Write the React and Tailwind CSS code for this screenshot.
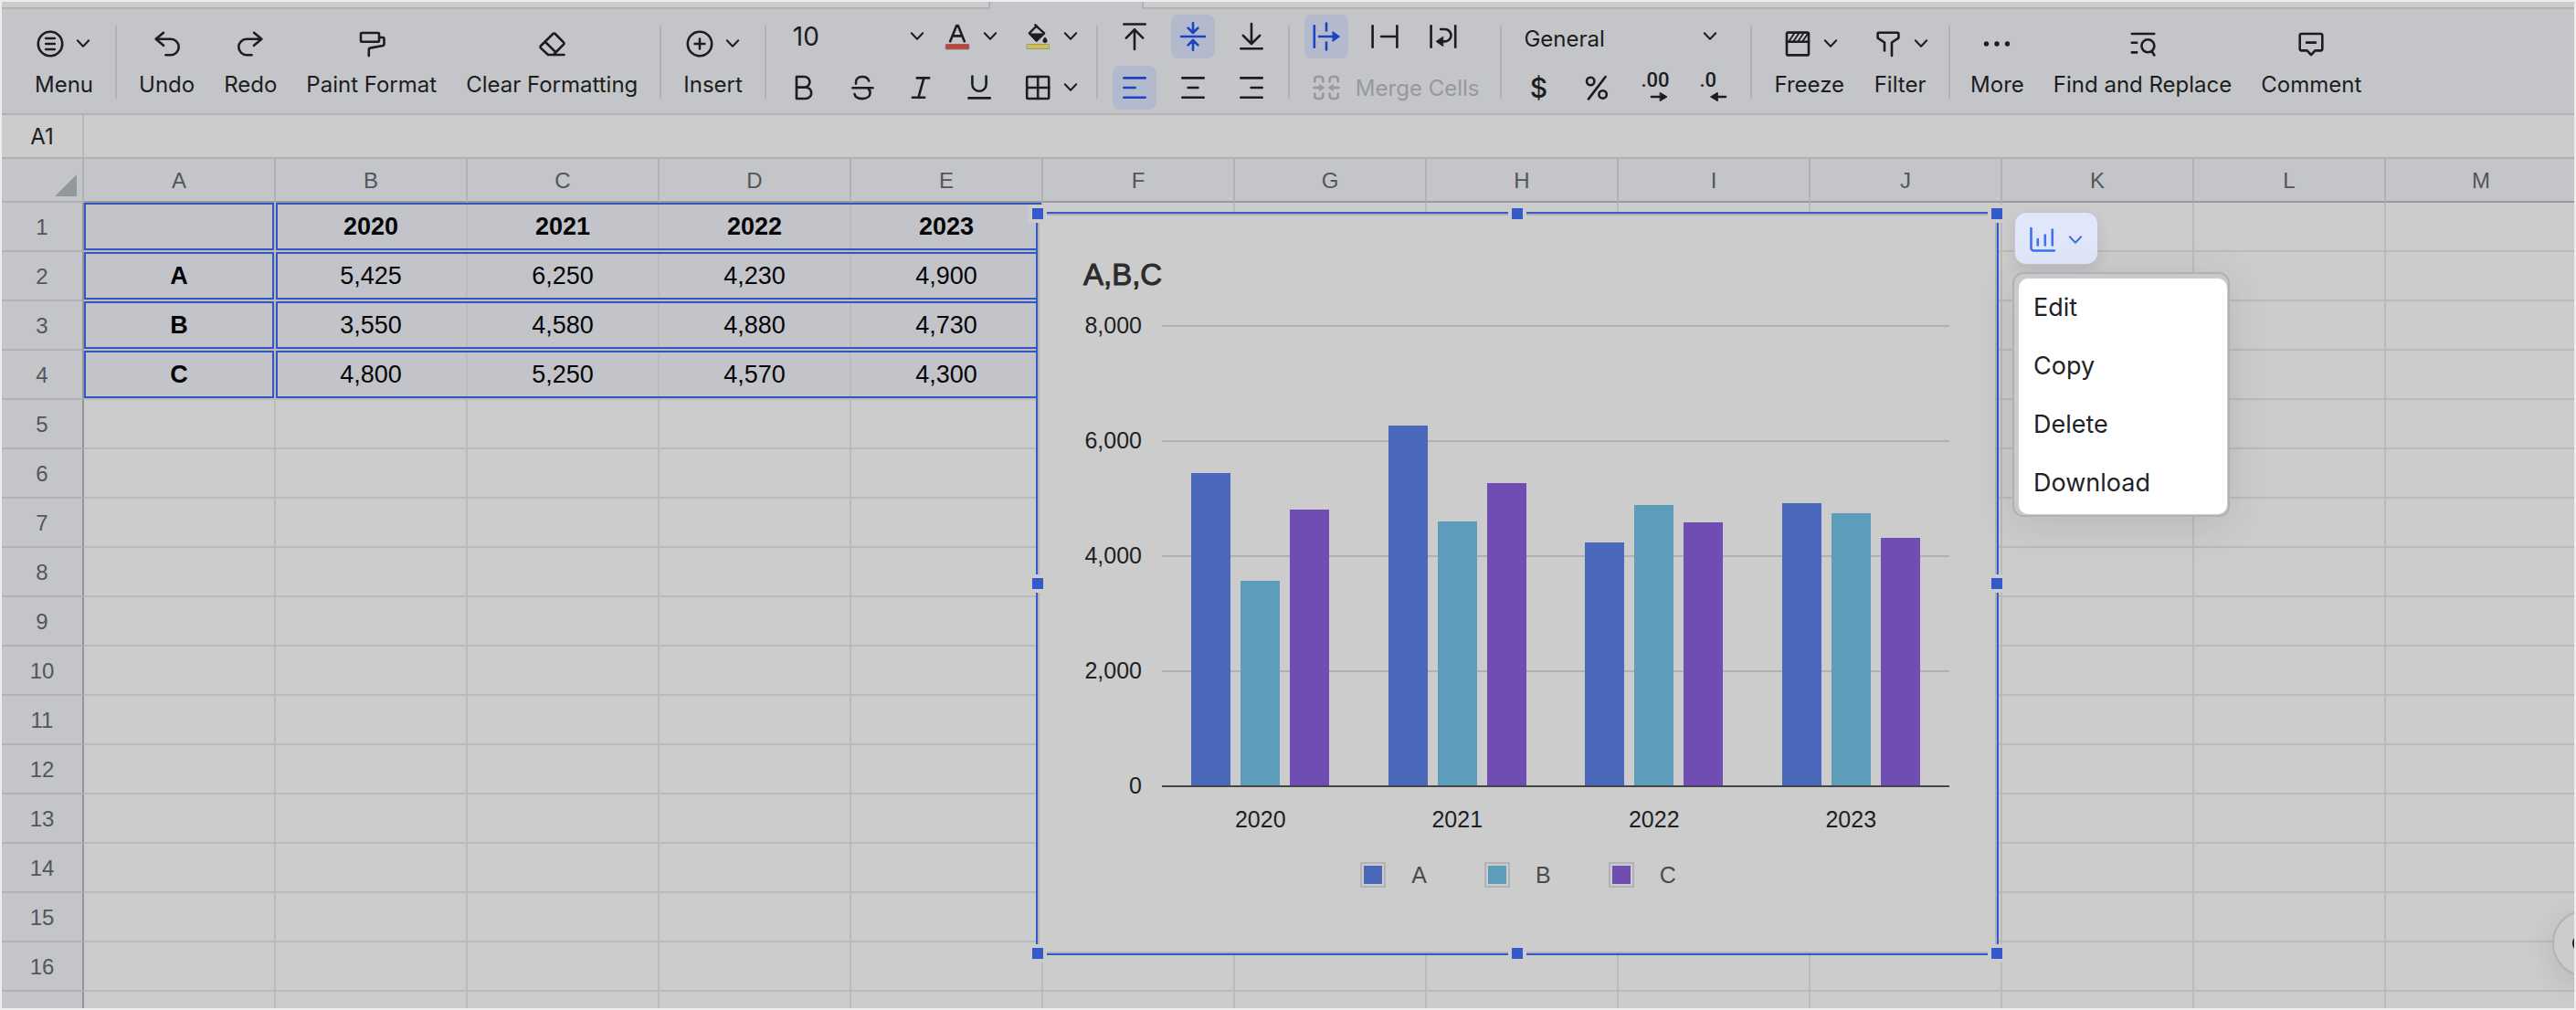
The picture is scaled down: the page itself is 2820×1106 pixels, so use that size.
import React from "react";

const UI = "font-['Inter','Liberation_Sans',sans-serif]";

function Svg({ children, className = "size-8 shrink-0", sw = 2.6 }) {
  return (
    <svg viewBox="0 0 32 32" className={className} fill="none" stroke="currentColor" strokeWidth={sw} strokeLinecap="round" strokeLinejoin="round" aria-hidden="true">
      {children}
    </svg>
  );
}

function Chevron({ className = "" }) {
  return (
    <svg viewBox="0 0 20 20" className={`size-5 shrink-0 ${className}`} fill="none" stroke="currentColor" strokeWidth="2" strokeLinecap="round" strokeLinejoin="round" aria-hidden="true">
      <path d="M3.8 6.2 10 12.8l6.2-6.6" />
    </svg>
  );
}

const icons = {
  menu: <><circle cx="16" cy="16" r="13.2" /><path d="M11.2 10h9.6M11.2 16h9.6M11.2 22h9.6" /></>,
  undo: <path d="M12 3.8 3.6 10.8 12 17.8M3.6 10.8H20a8.7 8.7 0 0 1 0 17.4h-5.6" />,
  redo: <path d="M20 3.8l8.4 7-8.4 7M28.4 10.8H12a8.7 8.7 0 0 0 0 17.4h5.6" />,
  paint: <><rect x="4" y="4" width="20" height="9.8" rx="1" /><path d="M24.5 9H28a1.5 1.5 0 0 1 1.5 1.5v6a1.5 1.5 0 0 1-1.2 1.5L14 20.6a1.5 1.5 0 0 0-1.2 1.5v7" /></>,
  eraser: <path d="M29.5 28H12L4 20.6a1.6 1.6 0 0 1 0-2.3L17.4 5a1.6 1.6 0 0 1 2.3 0L29 14.3a1.6 1.6 0 0 1 0 2.3L17.8 28M9 14l11.6 11.4" />,
  insert: <><circle cx="16" cy="16" r="13.2" /><path d="M10.6 16h10.8M16 10.6v10.8" /></>,
  fontColor: <><path d="M8.2 21.2 15.2 4h1.6l7 17.2M10.8 15.4h10.4" /><rect x="3.7" y="24.6" width="25" height="5.2" fill="#c0443a" stroke="#9c5a55" strokeWidth="1" /></>,
  fill: <><path d="M13.4 3.4 15.6 5.6" /><path d="M14.6 4.6 6.8 12.4l7.8 8.2 8.6-8.2z" strokeWidth="2.2" /><path d="M6 12.4h18L14.6 22z" fill="currentColor" stroke="none" /><path d="M24 16.2c1.6 2 2.5 3.3 2.5 4.3a2.5 2.5 0 0 1-5 0c0-1 .9-2.3 2.5-4.3z" fill="currentColor" stroke="none" /><rect x="4.5" y="24.5" width="24" height="5" fill="#ccc153" stroke="#9d996a" strokeWidth="1" /></>,
  bold: <path d="M8 4h8.6a5.700 5.700 0 0 1 0 11.600H8zM8 15.600h10a6.200 6.200 0 0 1 0 12.400H8z" />,
  strike: <><path d="M23.200 8.600C22.200 5.600 19.400 4 16 4c-4.400 0-7 2.600-7 6v1.600M22.800 17.600c1.300 1 1.800 2.400 1.800 3.900 0 4-3.600 6.600-8.600 6.600-4.800 0-7.900-2-8.500-5" /><path d="M5.400 16.300h22" /></>,
  italic: <path d="M11.800 5.400h13.400M6.800 26.800h13.400M19.400 5.400l-6 21.400" />,
  underline: <path d="M8.400 3.600v8.600a7.600 7.600 0 0 0 15.200 0V3.600M4.400 27.400h23.400" />,
  grid: <><rect x="4.200" y="4" width="24" height="24" rx="1" /><path d="M16.200 4v24M4.200 16h24" /></>,
  alignTop: <path d="M4.300 2.500h23.400M16 30V8.300M6.800 17.600 16 8.300l9.200 9.300" />,
  alignMid: <path d="M3 16h26M16 1.200v10.600M10.600 6.600 16 12l5.400-5.400M16 30.800V20.200M10.600 25.400 16 20l5.400 5.400" />,
  alignBottom: <path d="M4.300 29.300h23.400M16 2v22M6.800 14.800 16 24l9.200-9.200" />,
  left: <path d="M4.300 5.400h23.400M4.300 16h12.400M4.300 26.700h23.400" />,
  center: <path d="M4.300 5.400h23.400M10.600 16h10.800M4.300 26.700h23.400" />,
  right: <path d="M4.300 5.400h23.400M15.600 16h12.100M4.300 26.700h23.400" />,
  overflow: <><path d="M2.800 4.300v23.400M16 1.500v8M16 22.500v8M8 16h15" /><path d="M23.200 10.800 30.600 16l-7.400 5.200z" fill="currentColor" strokeWidth="1" /></>,
  clip: <path d="M2.600 4.300v23.400M29.400 4.300v23.400M12 16h17" />,
  wrap: <><path d="M2.600 4.300v23.400M29.200 4.300v23.400M13 8h4.800a6.700 6.700 0 0 1 0 13.400H15" /><path d="M15.400 16.400 8.200 21.400l7.200 5z" fill="currentColor" strokeWidth="1" /></>,
  merge: <><path d="M3.200 9.500V7a3 3 0 0 1 3-3h3.200a3 3 0 0 1 3 3v2.500M3.200 22.500V25a3 3 0 0 0 3 3h3.200a3 3 0 0 0 3-3v-2.500M19.600 9.500V7a3 3 0 0 1 3-3h3.200a3 3 0 0 1 3 3v2.500M19.600 22.500V25a3 3 0 0 0 3 3h3.200a3 3 0 0 0 3-3v-2.500M2.600 16h6M29.400 16h-6" /><path d="M9 12.800 13.600 16 9 19.200zM23 12.800 18.400 16l4.600 3.200z" fill="currentColor" strokeWidth="1" /></>,
  percent: <><circle cx="9.200" cy="9" r="4.200" /><circle cx="22.600" cy="23.400" r="4.200" /><path d="M25.600 4 7 28.400" /></>,
  freeze: <><rect x="4" y="3.600" width="24" height="24.800" rx="1.500" /><path d="M4 13.800h24" /><path d="M6.500 13 12 5M11.500 13 17 5M16.500 13 22 5M21.500 13 27 5" strokeWidth="1.800" /></>,
  filter: <path d="M12 23.500v-9L4.600 9.600V4.700a1 1 0 0 1 1-1h20.800a1 1 0 0 1 1 1v4.900L20 14.500V29" />,
  more: <g fill="currentColor" stroke="none"><circle cx="4.500" cy="16" r="2.700" /><circle cx="16" cy="16" r="2.700" /><circle cx="27.500" cy="16" r="2.700" /></g>,
  find: <><path d="M3.800 5h24.400M3.800 14.700h5.400M3.800 25.400h5.400M25.800 24.500l2.600 4" /><circle cx="21.400" cy="18.300" r="7" /></>,
  comment: <path d="M5.500 5h21a1.800 1.800 0 0 1 1.800 1.800v14.800a1.800 1.800 0 0 1-1.800 1.800h-6L16 28l-4.500-4.600h-6a1.800 1.800 0 0 1-1.800-1.800V6.800A1.800 1.800 0 0 1 5.500 5zM11 14.600h10" />,
};

function Tool({ icon, label, menu, tight }) {
  return (
    <button type="button" className="flex h-20 shrink-0 flex-col items-center gap-[13px] px-4 pt-1">
      <span className="flex items-center gap-2.5">
        <Svg>{icons[icon]}</Svg>
        {menu && <Chevron className={tight ? "-mr-1" : ""} />}
      </span>
      <span className="text-2xl leading-8 whitespace-nowrap">{label}</span>
    </button>
  );
}

function Btn({ icon, label, active, menu, children }) {
  return (
    <button type="button" aria-label={label} aria-pressed={active ? true : undefined} className={`flex h-12 shrink-0 items-center rounded-lg ${active ? "bg-[#b4bacd] text-[#1d44c0]" : ""}`}>
      <span className="flex w-12 justify-center">{children || <Svg>{icons[icon]}</Svg>}</span>
      {menu && <span className="flex w-6 justify-center"><Chevron /></span>}
    </button>
  );
}

function Decimal({ text, reverse }) {
  return (
    <span className="flex h-10 w-9 flex-col">
      <span className="h-6 pl-0.5 text-left font-['Roboto',sans-serif] text-[22px] leading-6 font-medium">{text}</span>
      <svg viewBox="0 0 36 12" className="h-3 w-9" fill="currentColor" stroke="currentColor" strokeLinecap="round" strokeLinejoin="round" aria-hidden="true">
        {reverse ? (
          <><path d="M31 6H22" strokeWidth="2.6" /><path d="M22 1.500 14.500 6l7.500 4.500z" strokeWidth="1" /></>
        ) : (
          <><path d="M14 6h9" strokeWidth="2.6" /><path d="M23.500 1.500 31 6l-7.500 4.500z" strokeWidth="1" /></>
        )}
      </svg>
    </span>
  );
}

const Sep = ({ className = "mx-2" }) => <div className={`h-20 w-0.5 shrink-0 bg-[#b1b2b6] ${className}`} />;
const Rows = ({ children }) => <div className="flex shrink-0 flex-col gap-2">{children}</div>;
const Row = ({ children }) => <div className="flex items-center gap-4">{children}</div>;

function Toolbar() {
  return (
    <div role="toolbar" aria-label="Sheet tools" className="flex h-[116px] shrink-0 items-center overflow-hidden border-b-2 border-[#b1b2b6] bg-[#c4c5c8] pt-0.5 pl-5">
      <Tool icon="menu" label="Menu" menu />
      <Sep />
      <Tool icon="undo" label="Undo" />
      <Tool icon="redo" label="Redo" />
      <Tool icon="paint" label="Paint Format" />
      <Tool icon="eraser" label="Clear Formatting" />
      <Sep />
      <Tool icon="insert" label="Insert" menu />
      <Sep className="mr-[17px] ml-2" />
      <Rows>
        <div className="flex items-center">
          <div className="grid w-[168px] items-center">
            <select aria-label="Font size" className="col-start-1 row-start-1 h-12 w-full appearance-none bg-transparent pl-3 text-[28px]"><option>10</option></select>
            <Chevron className="pointer-events-none col-start-1 row-start-1 mr-2.5 justify-self-end" />
          </div>
          <Row>
            <Btn icon="fontColor" label="Text color" menu />
            <Btn icon="fill" label="Fill color" menu />
          </Row>
        </div>
        <Row>
          <Btn icon="bold" label="Bold" />
          <Btn icon="strike" label="Strikethrough" />
          <Btn icon="italic" label="Italic" />
          <Btn icon="underline" label="Underline" />
          <Btn icon="grid" label="Borders" menu />
        </Row>
      </Rows>
      <Sep className="mx-4" />
      <Rows>
        <Row>
          <Btn icon="alignTop" label="Align top" />
          <Btn icon="alignMid" label="Align middle" active />
          <Btn icon="alignBottom" label="Align bottom" />
        </Row>
        <Row>
          <Btn icon="left" label="Align left" active />
          <Btn icon="center" label="Align center" />
          <Btn icon="right" label="Align right" />
        </Row>
      </Rows>
      <Sep className="mx-4" />
      <Rows>
        <Row>
          <Btn icon="overflow" label="Overflow" active />
          <Btn icon="clip" label="Clip" />
          <Btn icon="wrap" label="Wrap" />
        </Row>
        <button type="button" disabled className="flex h-12 items-center gap-2 pr-2 text-[#97989b]">
          <span className="flex w-12 justify-center"><Svg>{icons.merge}</Svg></span>
          <span className="pt-0.5 text-2xl whitespace-nowrap">Merge Cells</span>
        </button>
      </Rows>
      <Sep className="mr-4 ml-[15px]" />
      <Rows>
        <div className="grid items-center">
          <select aria-label="Number format" className="col-start-1 row-start-1 h-12 w-full appearance-none bg-transparent pt-1.5 pl-2 text-2xl"><option>General</option></select>
          <Chevron className="pointer-events-none col-start-1 row-start-1 mr-[18px] justify-self-end" />
        </div>
        <Row>
          <Btn label="Currency"><span className="text-[30px] leading-8 font-medium">$</span></Btn>
          <Btn icon="percent" label="Percent" />
          <Btn label="Increase decimals"><Decimal text=".00" /></Btn>
          <Btn label="Decrease decimals"><Decimal text=".0" reverse /></Btn>
        </Row>
      </Rows>
      <Sep className="mr-2 ml-4" />
      <Tool icon="freeze" label="Freeze" menu tight />
      <Tool icon="filter" label="Filter" menu tight />
      <Sep className="mr-1.5 ml-2" />
      <Tool icon="more" label="More" />
      <Tool icon="find" label="Find and Replace" />
      <Tool icon="comment" label="Comment" />
    </div>
  );
}

const columns = "ABCDEFGHIJKLM".split("");
const data = [
  ["", "2020", "2021", "2022", "2023"],
  ["A", "5,425", "6,250", "4,230", "4,900"],
  ["B", "3,550", "4,580", "4,880", "4,730"],
  ["C", "4,800", "5,250", "4,570", "4,300"],
];

const edges = ["border-2", "border-y-2 border-l-2 -mr-0.5 pr-1", "border-y-2 -mr-0.5 pr-0.5", "border-y-2 -mr-0.5 pr-0.5", "border-y-2"];

function Sheet() {
  return (
    <table className="w-[2820px] table-fixed border-separate border-spacing-0 font-['Liberation_Sans',sans-serif]">
      <colgroup>
        <col className="w-[90px]" />
        {columns.map((c) => <col key={c} className="w-[210px]" />)}
      </colgroup>
      <thead>
        <tr className="h-12 bg-[#c4c5c8] text-2xl text-[#53565b]">
          <td className="border-r-2 border-b-2 border-[#b1b2b6] p-0">
            <svg viewBox="0 0 24 24" className="mt-3 mr-1.5 ml-auto size-6" aria-hidden="true"><path d="M24 0v24H0z" fill="#95989b" /></svg>
          </td>
          {columns.map((c) => (
            <th key={c} scope="col" className="border-r-2 border-b-2 border-r-[#b1b2b6] border-b-[#97999c] p-0 pt-0.5 font-normal">{c}</th>
          ))}
        </tr>
      </thead>
      <tbody>
        {Array.from({ length: 17 }, (_, r) => (
          <tr key={r} className="h-[54px]">
            <th scope="row" className="border-r-2 border-b-2 border-r-[#939598] border-b-[#b1b2b6] bg-[#c4c5c8] p-0 pt-0.5 text-2xl font-normal text-[#53565b]">{r < 16 ? r + 1 : ""}</th>
            {columns.map((c, i) => {
              const picked = r < 4 && i < 5;
              return (
                <td key={c} className={`border-r-2 border-b-2 border-[#bababb] p-0 ${picked ? "bg-[#c3c4ca]" : ""}`}>
                  {picked && (
                    <div className={`flex h-[52px] items-center justify-center border-[#3257c2] text-[27px] text-[#050507] ${edges[i]} ${r === 0 || i === 0 ? "font-bold" : ""}`}>
                      {data[r][i]}
                    </div>
                  )}
                </td>
              );
            })}
          </tr>
        ))}
      </tbody>
    </table>
  );
}

const series = [
  { name: "A", color: "bg-[#4a68ba]", values: [5425, 6250, 4230, 4900] },
  { name: "B", color: "bg-[#5d9cba]", values: [3550, 4580, 4880, 4730] },
  { name: "C", color: "bg-[#6f4db3]", values: [4800, 5250, 4570, 4300] },
];
const years = ["2020", "2021", "2022", "2023"];
const handles = ["left-0 top-0", "left-1/2 top-0", "left-full top-0", "left-0 top-1/2", "left-full top-1/2", "left-0 top-full", "left-1/2 top-full", "left-full top-full"];

function Chart() {
  return (
    <figure className="absolute top-[60px] left-[1134px] h-[810px] w-[1050px] bg-[#ccc] font-['Liberation_Sans',sans-serif] outline-2 outline-[#3559c8]">
      <div className="h-full border-2 border-[#b1b2b6] pt-10 pr-[50px]">
        <figcaption className="pt-0.5 pl-12 text-[33px] leading-[46px] text-[#2b2c2c] [-webkit-text-stroke:1px]">A,B,C</figcaption>
        <div className="mt-8 flex text-[25px] leading-8 text-[#1d1f23]">
          <div className="-mt-4 flex w-[134px] shrink-0 flex-col gap-[94px] pr-[22px] text-right">
            {["8,000", "6,000", "4,000", "2,000", "0"].map((t) => <div key={t}>{t}</div>)}
          </div>
          <div className="flex-1">
            <div className="grid border-b-2 border-[#45474b]">
              <div className="col-start-1 row-start-1">
                {[0, 1, 2, 3].map((n) => <div key={n} className="h-[126px] border-t-2 border-[#b1b1b2]" />)}
              </div>
              <div className="col-start-1 row-start-1 flex">
                {years.map((y, k) => (
                  <div key={y} className="flex flex-1 items-end justify-center gap-[11px]">
                    {series.map((s) => <div key={s.name} className={`w-[43px] ${s.color}`} style={{ height: `${s.values[k] / 80}%` }} />)}
                  </div>
                ))}
              </div>
            </div>
            <div className="mt-[19px] flex">
              {years.map((y) => <div key={y} className="flex-1 text-center">{y}</div>)}
            </div>
          </div>
        </div>
        <div className="mt-[31px] -mr-[50px] flex justify-center gap-[63px] pl-0.5 text-[25px] leading-7 text-[#4a4b4d]">
          {series.map((s) => (
            <div key={s.name} className="flex items-center gap-7">
              <span className="size-7 border-2 border-[#b1b2b6] p-0.5"><span className={`block size-5 ${s.color}`} /></span>
              {s.name}
            </div>
          ))}
        </div>
      </div>
      {handles.map((h) => (
        <span key={h} className={`absolute size-5 -translate-x-1/2 -translate-y-1/2 border-4 border-[#ccc] bg-[#3559c8] ${h}`} />
      ))}
    </figure>
  );
}

function ChartMenu() {
  return (
    <div className="absolute top-[59px] left-[2201px]">
      <button type="button" aria-label="Chart options" aria-expanded="true" className="ml-[3px] flex h-14 w-[90px] items-center gap-2.5 rounded-xl bg-[#e1e7fb] pt-1 pl-3.5 text-[#3f6ff0] shadow-[0_0_0_1px_#c3c5cd,0_6px_16px_rgba(0,0,0,0.1)]">
        <Svg>
          <path d="M3.500 3v21.500a3 3 0 0 0 3 3h22.500M10.800 15v6.500M18.800 10.500v11M26.800 4.500v17" />
        </Svg>
        <Chevron />
      </button>
      <div role="menu" className="mt-[9px] w-[238px] rounded-xl border-2 border-[#b0b1b6] bg-[#cacacb] pt-[5px] pr-px pb-px pl-[5px] shadow-[0_8px_48px_rgba(0,0,0,0.1)]">
        <div className="rounded-[10px] bg-white pb-0.5">
          {["Edit", "Copy", "Delete", "Download"].map((t) => (
            <button key={t} type="button" role="menuitem" className="flex h-16 w-full items-center pl-4 text-[27px] text-[#1f2329]">{t}</button>
          ))}
        </div>
      </div>
    </div>
  );
}

export default function App() {
  return (
    <div className={`flex h-screen flex-col overflow-hidden border-2 border-[#ededee] bg-[#ccc] text-[#1b1d20] ${UI}`}>
      <div className="flex h-2 shrink-0">
        <div className="w-[1080px] shrink-0 border-b-2 border-[#b1b2b6]" />
        <div className="w-[170px] shrink-0 border-x-2 border-[#b1b2b6] bg-[#c4c5c8]" />
        <div className="flex-1 border-b-2 border-[#b1b2b6]" />
      </div>
      <Toolbar />
      <div className="flex h-12 shrink-0 border-b-2 border-[#b1b2b6] text-2xl">
        <input aria-label="Cell reference" defaultValue="A1" className="w-[90px] border-r-2 border-[#b9b9bb] bg-transparent pt-0.5 text-center" />
        <input aria-label="Formula" className="flex-1 bg-transparent px-4 outline-none" />
      </div>
      <div className="relative min-h-0 flex-1 overflow-hidden">
        <Sheet />
        <Chart />
        <ChartMenu />
        <button type="button" aria-label="Help" className="absolute -right-[50px] bottom-[34px] flex size-[74px] items-center rounded-full border-2 border-[#b1b2b6] bg-[#ccc] pl-[18px] shadow-[0_8px_32px_rgba(0,0,0,0.1)]">
          <Svg><circle cx="12" cy="16" r="10" fill="currentColor" stroke="none" /></Svg>
        </button>
      </div>
    </div>
  );
}
